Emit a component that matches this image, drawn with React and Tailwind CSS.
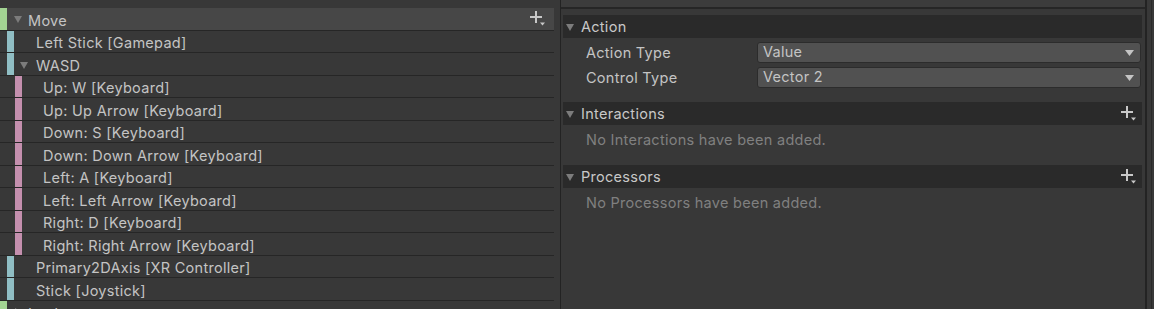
import React from 'react';

const Fold = ({ open = true }) => (
  <svg width="8" height="8" viewBox="0 0 8 8" className="shrink-0">
    <path d={open ? 'M0 1h8L4 8z' : 'M1 0v8l7-4z'} fill="#7c7c7c" />
  </svg>
);

const AddIcon = () => (
  <svg width="16" height="16" viewBox="0 0 16 16" className="shrink-0">
    <rect x="5" y="0" width="2" height="12" fill="#c8c8c8" />
    <rect x="0" y="5" width="12" height="2" fill="#c8c8c8" />
    <path d="M10 11.5h5l-2.5 3z" fill="#c8c8c8" />
  </svg>
);

const DropArrow = () => (
  <svg width="9" height="6" viewBox="0 0 9 6" className="shrink-0">
    <path d="M0 0h9L4.5 6z" fill="#c4c4c4" />
  </svg>
);

const rows = [
  { type: 'binding', label: 'Left Stick [Gamepad]' },
  { type: 'composite', label: 'WASD' },
  { type: 'part', label: 'Up: W [Keyboard]' },
  { type: 'part', label: 'Up: Up Arrow [Keyboard]' },
  { type: 'part', label: 'Down: S [Keyboard]' },
  { type: 'part', label: 'Down: Down Arrow [Keyboard]' },
  { type: 'part', label: 'Left: A [Keyboard]' },
  { type: 'part', label: 'Left: Left Arrow [Keyboard]' },
  { type: 'part', label: 'Right: D [Keyboard]' },
  { type: 'part', label: 'Right: Right Arrow [Keyboard]' },
  { type: 'binding', label: 'Primary2DAxis [XR Controller]' },
  { type: 'binding', label: 'Stick [Joystick]' },
];

const TreeRow = ({ row }) => {
  if (row.type === 'part') {
    return (
      <div className="flex h-[22.5px] shrink-0 items-stretch border-b border-[#262626]">
        <div className="w-[15px] shrink-0" />
        <div className="w-[7px] shrink-0 bg-[#c48fae]" />
        <span className="ml-[21px] self-center pt-[4px]">{row.label}</span>
      </div>
    );
  }
  return (
    <div className="flex h-[22.5px] shrink-0 items-stretch border-b border-[#262626]">
      <div className="w-[7px] shrink-0" />
      <div className="w-[7px] shrink-0 bg-[#90bec4]" />
      {row.type === 'composite' ? (
        <div className="flex items-center">
          <div className="ml-[6px] pt-[2px]"><Fold /></div>
          <span className="ml-[8px] pt-[4px]">{row.label}</span>
        </div>
      ) : (
        <span className="ml-[22px] self-center pt-[4px]">{row.label}</span>
      )}
    </div>
  );
};

const SectionHeader = ({ title, add }) => (
  <div className="flex h-[23px] shrink-0 items-center bg-[#2a2a2a] pl-[3px] pr-[5px]">
    <Fold />
    <span className="ml-[7px] flex-1 pt-[2px] text-[#c8c8c8]">{title}</span>
    {add && <AddIcon />}
  </div>
);

const Dropdown = ({ label, value }) => (
  <div className="flex h-[21px] items-center">
    <span className="w-[194px] shrink-0 pl-[23px] pt-[1px]">{label}</span>
    <div className="flex h-full flex-1 items-center justify-between rounded-[3px] border border-[#2c2c2c] bg-[#515151] pl-[5px] pr-[6px]">
      <span>{value}</span>
      <DropArrow />
    </div>
  </div>
);

export default function App() {
  return (
    <div
      className="flex h-[309px] w-[1154px] overflow-hidden bg-[#383838] text-[14.5px] leading-none tracking-[0.28px] text-[#c4c4c4]"
      style={{ fontFamily: 'Inter, "Noto Sans", sans-serif' }}
    >
      {/* actions tree */}
      <div className="flex w-[554px] shrink-0 flex-col pt-[8px]">
        <div className="flex h-[22.5px] shrink-0 items-stretch border-b border-[#262626] bg-[#474747]">
          <div className="w-[7px] shrink-0 bg-[#a3d493]" />
          <div className="ml-[7px] flex items-center pt-[1px]"><Fold /></div>
          <span className="ml-[6px] flex-1 self-center pt-[4px]">Move</span>
          <div className="flex items-center pr-[8px]"><AddIcon /></div>
        </div>
        {rows.map((r) => (
          <TreeRow key={r.label} row={r} />
        ))}
        <div className="flex h-[22.5px] shrink-0 items-stretch">
          <div className="w-[7px] shrink-0 bg-[#a3d493]" />
          <div className="ml-[7px] flex items-center"><Fold open={false} /></div>
          <span className="ml-[6px] self-center pt-[4px]">Look</span>
        </div>
      </div>

      <div className="w-[7px] shrink-0 border-r border-[#232323]" />

      {/* properties */}
      <div className="flex flex-1 flex-col">
        <div className="h-[9px] shrink-0 border-b-2 border-[#262626] bg-[#3c3c3c]" />
        <div className="flex flex-col pl-[2px] pr-[3px] pt-[6px]">
          <SectionHeader title="Action" />
          <div className="mt-[4px] flex flex-col gap-[4px] pr-[1px]">
            <Dropdown label="Action Type" value="Value" />
            <Dropdown label="Control Type" value="Vector 2" />
          </div>
          <div className="mt-[14px]">
            <SectionHeader title="Interactions" add />
          </div>
          <div className="flex h-[28px] items-center pl-[23px] pt-[2px] text-[#808080]">
            No Interactions have been added.
          </div>
          <div className="mt-[12px]">
            <SectionHeader title="Processors" add />
          </div>
          <div className="flex h-[28px] items-center pl-[23px] pt-[2px] text-[#808080]">
            No Processors have been added.
          </div>
        </div>
      </div>

      <div className="flex w-[9px] shrink-0 border-l-2 border-[#232323]">
        <div className="w-[4px] shrink-0" />
        <div className="w-[1px] shrink-0 bg-[#2a2a2a]" />
      </div>
    </div>
  );
}
